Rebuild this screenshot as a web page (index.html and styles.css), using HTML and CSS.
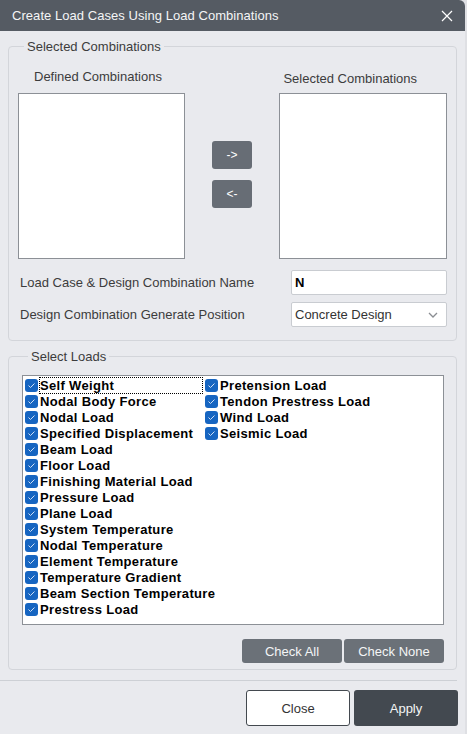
FILE: index.html
```html
<!DOCTYPE html>
<html>
<head>
<meta charset="utf-8">
<link rel="stylesheet" href="styles.css">
</head>
<body>
<div class="dialog">
  <div class="titlebar">
    <span class="title">Create Load Cases Using Load Combinations</span>
    <svg class="close-x" width="12" height="12" viewBox="0 0 12 12"><path d="M1 1 L11 11 M11 1 L1 11" stroke="#ffffff" stroke-width="1.2" fill="none"/></svg>
  </div>
  <div class="content">
    <fieldset class="group group1">
      <legend>Selected Combinations</legend>
      <div class="combo-area">
        <div class="col col-left">
          <div class="col-label lbl-left">Defined Combinations</div>
          <div class="listbox small"></div>
        </div>
        <div class="mid-buttons">
          <div class="arrow-btn b1">-&gt;</div>
          <div class="arrow-btn b2">&lt;-</div>
        </div>
        <div class="col col-right">
          <div class="col-label lbl-right">Selected Combinations</div>
          <div class="listbox small"></div>
        </div>
      </div>
      <div class="form-row r1">
        <span class="form-label">Load Case &amp; Design Combination Name</span>
        <div class="textbox"><b>N</b></div>
      </div>
      <div class="form-row r2">
        <span class="form-label">Design Combination Generate Position</span>
        <div class="textbox select"><span>Concrete Design</span>
          <svg width="10" height="6" viewBox="0 0 10 6"><path d="M1 1 L5 5 L9 1" stroke="#8a8d92" stroke-width="1.3" fill="none"/></svg>
        </div>
      </div>
    </fieldset>

    <fieldset class="group group2">
      <legend>Select Loads</legend>
      <div class="loadlist">
        <div class="lcol c1">
          <div class="item"><i class="cb"></i><span class="focus">Self Weight</span></div>
          <div class="item"><i class="cb"></i><span>Nodal Body Force</span></div>
          <div class="item"><i class="cb"></i><span>Nodal Load</span></div>
          <div class="item"><i class="cb"></i><span>Specified Displacement</span></div>
          <div class="item"><i class="cb"></i><span>Beam Load</span></div>
          <div class="item"><i class="cb"></i><span>Floor Load</span></div>
          <div class="item"><i class="cb"></i><span>Finishing Material Load</span></div>
          <div class="item"><i class="cb"></i><span>Pressure Load</span></div>
          <div class="item"><i class="cb"></i><span>Plane Load</span></div>
          <div class="item"><i class="cb"></i><span>System Temperature</span></div>
          <div class="item"><i class="cb"></i><span>Nodal Temperature</span></div>
          <div class="item"><i class="cb"></i><span>Element Temperature</span></div>
          <div class="item"><i class="cb"></i><span>Temperature Gradient</span></div>
          <div class="item"><i class="cb"></i><span>Beam Section Temperature</span></div>
          <div class="item"><i class="cb"></i><span>Prestress Load</span></div>
        </div>
        <div class="lcol c2">
          <div class="item"><i class="cb"></i><span>Pretension Load</span></div>
          <div class="item"><i class="cb"></i><span>Tendon Prestress Load</span></div>
          <div class="item"><i class="cb"></i><span>Wind Load</span></div>
          <div class="item"><i class="cb"></i><span>Seismic Load</span></div>
        </div>
      </div>
      <div class="check-buttons">
        <div class="gbtn">Check All</div>
        <div class="gbtn">Check None</div>
      </div>
    </fieldset>
  </div>
  <div class="separator"></div>
  <div class="footer">
    <div class="fbtn close">Close</div>
    <div class="fbtn apply">Apply</div>
  </div>
</div>
</body>
</html>
```

FILE: styles.css
```css
html, body {
  margin: 0;
  padding: 0;
}
body {
  width: 467px;
  height: 734px;
  background: #dfe0e4;
  font-family: "Liberation Sans", Arial, sans-serif;
  font-size: 13px;
  overflow: hidden;
}
.dialog {
  width: 465px;
  height: 734px;
  background: #e9eaee;
  border-top-right-radius: 6px;
  overflow: hidden;
  display: flex;
  flex-direction: column;
}
.titlebar {
  height: 31px;
  background: #555b63;
  display: flex;
  align-items: center;
  justify-content: space-between;
  padding: 0 12px 0 12px;
  flex: none;
}
.title {
  color: #f4f5f6;
  font-size: 13px;
  letter-spacing: 0.05px;
}
.content {
  padding: 0 8px 0 8px;
  display: flex;
  flex-direction: column;
}
.group {
  margin: 0;
  padding: 0;
  border: 1px solid #d3d5da;
  border-radius: 4px;
  min-width: 0;
}
.group legend {
  margin-left: 6px;
  padding: 0 3px;
  color: #3c3c3c;
  font-size: 13px;
  line-height: 17px;
}
.group1 {
  margin-top: 7px;
  height: 303px;
  box-sizing: border-box;
  padding: 0 9px 0 9px;
}
.combo-area {
  display: flex;
  align-items: flex-start;
}
.col {
  display: flex;
  flex-direction: column;
}
.col-left {
  width: 167px;
}
.col-right {
  width: 168px;
}
.col-label {
  color: #3c3c3c;
  line-height: 16px;
}
.lbl-left {
  padding-left: 16px;
  margin-top: 14px;
  height: 24px;
}
.lbl-right {
  padding-left: 4px;
  margin-top: 16px;
  height: 22px;
}
.listbox {
  background: #ffffff;
  border: 1px solid #8c9096;
  box-sizing: border-box;
}
.listbox.small {
  height: 166px;
}
.mid-buttons {
  width: 95px;
  display: flex;
  flex-direction: column;
  align-items: center;
  gap: 11px;
  padding-top: 86px;
}
.arrow-btn {
  width: 40px;
  height: 28px;
  background: #676d75;
  border-radius: 3px;
  color: #ffffff;
  font-size: 12px;
  display: flex;
  align-items: center;
  justify-content: center;
}
.form-row {
  display: flex;
  align-items: center;
  justify-content: space-between;
  padding-left: 2px;
}
.form-row.r1 {
  margin-top: 11px;
}
.form-row.r2 {
  margin-top: 7px;
}
.form-label {
  color: #3c3c3c;
}
.textbox {
  width: 156px;
  height: 25px;
  box-sizing: border-box;
  background: #ffffff;
  border: 1px solid #c9ccd1;
  border-radius: 2px;
  display: flex;
  align-items: center;
  padding-left: 3px;
  color: #000;
}
.textbox b {
  font-weight: bold;
  font-size: 13px;
}
.textbox.select {
  justify-content: space-between;
  padding-right: 8px;
  color: #333;
}
.group2 {
  margin-top: 7px;
  height: 322px;
  box-sizing: border-box;
  padding: 0 12px 0 13px;
}
.loadlist {
  margin-top: 10px;
  height: 250px;
  box-sizing: border-box;
  background: #ffffff;
  border: 1px solid #8c9096;
  display: flex;
  padding: 1px 0 0 2px;
}
.lcol {
  display: flex;
  flex-direction: column;
}
.lcol.c1 {
  width: 180px;
}
.item {
  height: 16px;
  display: flex;
  align-items: center;
  gap: 1px;
  font-weight: bold;
  font-size: 13px;
  letter-spacing: 0.33px;
  color: #000;
  white-space: nowrap;
}
.item span {
  padding: 0 1px 0 0;
  line-height: 15px;
  border: 1px solid transparent;
}
.item span.focus {
  border: 1px dotted #000;
  width: 164px;
  box-sizing: border-box;
}
.cb {
  width: 13px;
  height: 13px;
  flex: none;
  border-radius: 3px;
  background: #1665c1 url("data:image/svg+xml;utf8,<svg xmlns='http://www.w3.org/2000/svg' width='13' height='13' viewBox='0 0 13 13'><path d='M3.5 6.5 L5.5 8.5 L9.5 4.5' stroke='%23cfe0f5' stroke-width='1' fill='none'/></svg>") no-repeat center;
}
.check-buttons {
  display: flex;
  justify-content: flex-end;
  gap: 2px;
  margin-top: 14px;
}
.gbtn {
  width: 100px;
  height: 24px;
  background: #6b7178;
  border-radius: 3px;
  color: #f4f5f6;
  font-size: 13px;
  display: flex;
  align-items: center;
  justify-content: center;
}
.separator {
  margin-top: 10px;
  height: 1px;
  background: #cdd0d5;
  width: 457px;
  flex: none;
}
.footer {
  display: flex;
  justify-content: flex-end;
  gap: 4px;
  padding: 9px 7px 0 0;
}
.fbtn {
  width: 104px;
  height: 36px;
  box-sizing: border-box;
  border-radius: 3px;
  display: flex;
  align-items: center;
  justify-content: center;
  font-size: 13px;
}
.fbtn.close {
  background: #ffffff;
  border: 1px solid #43494f;
  color: #333;
}
.fbtn.apply {
  background: #434950;
  color: #f4f5f6;
}
```
